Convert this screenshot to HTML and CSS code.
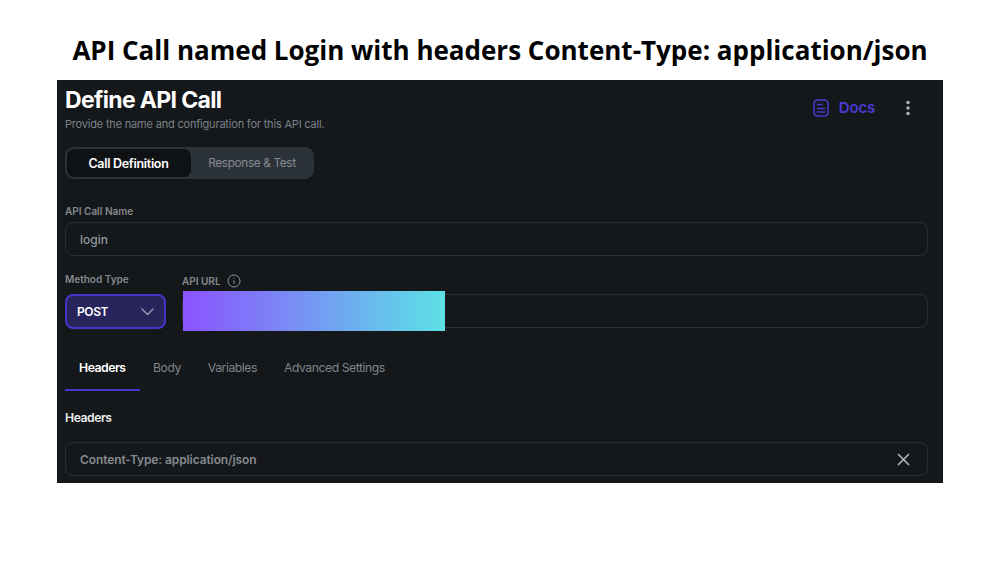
FILE: index.html
```html
<!DOCTYPE html>
<html lang="en">
<head>
<meta charset="utf-8">
<title>API Call</title>
<link rel="stylesheet" href="styles.css">
</head>
<body>
<h1 class="caption">API Call named Login with headers Content-Type: application/json</h1>
<main class="panel">
  <header class="top">
    <div>
      <h2 class="title">Define API Call</h2>
      <p class="subtitle">Provide the name and configuration for this API call.</p>
    </div>
    <div class="actions">
      <svg class="doc-icon" width="16" height="18" viewBox="0 0 16 18" fill="none" stroke="#4b39d6" stroke-width="1.5" stroke-linecap="round"><rect x="1" y="1" width="14" height="16" rx="3.5"/><path d="M4.5 5.5h4.5M4.5 9.5h7M4.5 13h7"/></svg>
      <span class="docs">Docs</span>
      <svg class="more" width="6" height="16" viewBox="0 0 6 16" fill="#b4b6ba"><circle cx="3" cy="2.5" r="1.7"/><circle cx="3" cy="8" r="1.7"/><circle cx="3" cy="13.5" r="1.7"/></svg>
    </div>
  </header>

  <div class="segment">
    <span class="seg on">Call Definition</span>
    <span class="seg off">Response &amp; Test</span>
  </div>

  <label class="label name-label">API Call Name</label>
  <div class="field name-field">login</div>

  <div class="method-row">
    <div class="method-col">
      <label class="label">Method Type</label>
      <div class="select">
        <span>POST</span>
        <svg width="13" height="8" viewBox="0 0 13 8" fill="none" stroke="#9a9ab4" stroke-width="1.4" stroke-linecap="round" stroke-linejoin="round"><path d="M1 1l5.500 5.500L12 1"/></svg>
      </div>
    </div>
    <div class="url-col">
      <div class="url-label">
        <label class="label">API URL</label>
        <svg width="14" height="14" viewBox="0 0 14 14" fill="none" stroke="#8f9296" stroke-width="1"><circle cx="7" cy="7" r="6"/><path d="M7 6.300v3.700M7 3.800v1"/></svg>
      </div>
      <div class="url-field"><div class="redact"></div></div>
    </div>
  </div>

  <nav class="tabs">
    <span class="tab active">Headers</span>
    <span class="tab">Body</span>
    <span class="tab">Variables</span>
    <span class="tab">Advanced Settings</span>
  </nav>

  <h3 class="section">Headers</h3>
  <div class="field header-field">
    <span>Content-Type: application/json</span>
    <svg width="13" height="13" viewBox="0 0 13 13" fill="none" stroke="#b0b2b6" stroke-width="1.700" stroke-linecap="round"><path d="M1.500 1.500l10 10M11.500 1.500l-10 10"/></svg>
  </div>
</main>
</body>
</html>
```
FILE: styles.css
```css
* { box-sizing: border-box; }
html, body { margin: 0; padding: 0; }
body {
  width: 1000px;
  height: 563px;
  background: #fff;
  overflow: hidden;
  font-family: Inter, "Liberation Sans", sans-serif;
}
.caption {
  margin: 0;
  height: 80px;
  padding-top: 32px;
  text-align: center;
  font-family: "Open Sans", sans-serif;
  font-weight: 700;
  font-size: 26px;
  line-height: 36px;
  color: #000;
}
.panel {
  width: 886px;
  height: 403px;
  margin-left: 57px;
  padding: 0 15px 0 8px;
  background: #14181b;
  overflow: hidden;
}
.top {
  display: flex;
  justify-content: space-between;
  align-items: flex-start;
  height: 67px;
}
.title {
  margin: 7px 0 0;
  font-size: 23px;
  line-height: 26px;
  font-weight: 700;
  letter-spacing: -0.65px;
  color: #fff;
}
.subtitle {
  margin: 4px 0 0;
  font-size: 11px;
  line-height: 14px;
  letter-spacing: -0.19px;
  color: #7d8187;
}
.actions {
  display: flex;
  align-items: center;
  margin-top: 18px;
  padding-right: 17px;
}
.doc-icon { margin-right: 10px; }
.docs {
  font-size: 15px;
  font-weight: 600;
  letter-spacing: -0.2px;
  color: #4b39d6;
  margin-right: 30px;
}
.segment {
  display: flex;
  width: 249px;
  height: 32px;
  border: 2px solid #2c3239;
  border-radius: 9px;
  background: #2c3239;
  font-size: 12.500px;
  letter-spacing: -0.3px;
}
.seg {
  display: flex;
  align-items: center;
  justify-content: center;
}
.seg.on {
  width: 124px;
  padding-right: 1px;
  border-radius: 7px;
  background: #0f1214;
  color: #fff;
  font-weight: 600;
}
.seg.off {
  flex: 1;
  font-size: 11.800px;
  letter-spacing: -0.35px;
  padding-left: 1px;
  color: #868a90;
}
.label {
  display: block;
  font-size: 10px;
  line-height: 12px;
  font-weight: 600;
  color: #84888e;
}
.name-label { margin-top: 26px; }
.field {
  display: flex;
  align-items: center;
  justify-content: space-between;
  height: 34px;
  padding: 0 17px 0 14px;
  border: 1px solid #2a2f35;
  border-radius: 8px;
  font-size: 12px;
  font-weight: 500;
  color: #93979c;
}
.name-field { margin-top: 5px; }
.method-row {
  display: flex;
  margin-top: 17px;
}
.method-col { width: 101px; }
.select {
  display: flex;
  align-items: center;
  justify-content: space-between;
  height: 35px;
  margin-top: 9px;
  padding: 0 10px 0 10px;
  border: 2px solid #4535c8;
  border-radius: 8px;
  background: #29255c;
  color: #fff;
  font-size: 12px;
  font-weight: 600;
  letter-spacing: -0.4px;
}
.url-col {
  flex: 1;
  margin-left: 16px;
}
.url-label {
  display: flex;
  align-items: center;
  gap: 6px;
  height: 14px;
  margin-top: 1px;
}
.url-field {
  height: 34px;
  margin-top: 6px;
  border: 1px solid #2a2f35;
  border-radius: 8px;
}
.redact {
  width: 262px;
  height: 40px;
  margin: -4px 0 0 0;
  background: linear-gradient(90deg, #8c52ff, #5ce1e6);
}
.tabs {
  display: flex;
  margin-top: 19px;
  height: 43px;
  font-size: 12.200px;
  letter-spacing: -0.45px;
  color: #80848a;
}
.tab {
  padding: 12px 13px 0;
  margin-right: 1px;
}
.tab.active {
  width: 75px;
  margin-right: 0;
  padding-left: 14px;
  border-bottom: 2px solid #4535c8;
  color: #fff;
  font-weight: 600;
}
.section {
  margin: 19px 0 0;
  font-size: 12.200px;
  line-height: 16px;
  font-weight: 600;
  letter-spacing: -0.45px;
  color: #eceded;
}
.header-field {
  margin-top: 16px;
  color: #85898e;
  font-weight: 600;
  letter-spacing: -0.1px;
}
```
